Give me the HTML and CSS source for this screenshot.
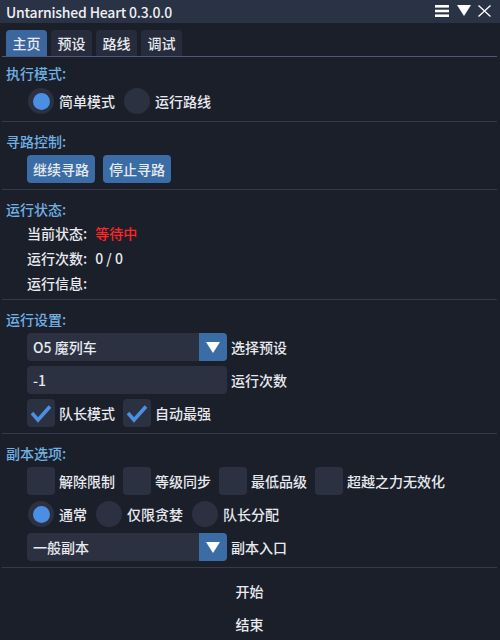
FILE: index.html
```html
<!DOCTYPE html>
<html lang="zh">
<head>
<meta charset="utf-8">
<title>Untarnished Heart</title>
<link rel="stylesheet" href="styles.css">
</head>
<body>
<div class="window">
  <div class="titlebar">
    <span class="title">Untarnished Heart 0.3.0.0</span>
    <div class="tb-icons">
      <svg class="ic-menu" width="14" height="12" viewBox="0 0 14 12"><rect x="0" y="0" width="14" height="2.6" fill="#fff"/><rect x="0" y="4.7" width="14" height="2.6" fill="#fff"/><rect x="0" y="9.4" width="14" height="2.6" fill="#fff"/></svg>
      <svg class="ic-tri" width="14" height="11" viewBox="0 0 14 11"><polygon points="0,0 14,0 7,11" fill="#fff"/></svg>
      <svg class="ic-x" width="13" height="12" viewBox="0 0 13 12"><path d="M0.5 0.5 L12.5 11.5 M12.5 0.5 L0.5 11.5" stroke="#fff" stroke-width="1.3" fill="none"/></svg>
    </div>
  </div>
  <div class="body">
    <div class="tabbar">
      <div class="tab active">主页</div>
      <div class="tab">预设</div>
      <div class="tab">路线</div>
      <div class="tab">调试</div>
    </div>

    <section class="sec first">
      <div class="hdr">执行模式:</div>
      <div class="row">
        <div class="opt"><span class="radio on"><span class="dot"></span></span><span>简单模式</span></div>
        <div class="opt"><span class="radio"></span><span>运行路线</span></div>
      </div>
    </section>

    <section class="sec">
      <div class="hdr">寻路控制:</div>
      <div class="row">
        <div class="btn">继续寻路</div>
        <div class="btn">停止寻路</div>
      </div>
    </section>

    <section class="sec">
      <div class="hdr">运行状态:</div>
      <div class="trow"><span>当前状态:</span><span class="val red">等待中</span></div>
      <div class="trow"><span>运行次数:</span><span class="val">0 / 0</span></div>
      <div class="trow"><span>运行信息:</span></div>
    </section>

    <section class="sec">
      <div class="hdr">运行设置:</div>
      <div class="row">
        <div class="combo"><span class="combo-text">O5 魔列车</span><span class="combo-btn"><svg width="14" height="11" viewBox="0 0 14 11"><polygon points="0,0 14,0 7,11" fill="#fff"/></svg></span></div>
        <span class="flabel">选择预设</span>
      </div>
      <div class="row">
        <div class="input">-1</div>
        <span class="flabel">运行次数</span>
      </div>
      <div class="row">
        <div class="opt"><span class="check"><svg width="28" height="28" viewBox="0 0 28 28"><polyline points="5,14 11,21 23,7.5" fill="none" stroke="#4a8fe4" stroke-width="3.6"/></svg></span><span>队长模式</span></div>
        <div class="opt"><span class="check"><svg width="28" height="28" viewBox="0 0 28 28"><polyline points="5,14 11,21 23,7.5" fill="none" stroke="#4a8fe4" stroke-width="3.6"/></svg></span><span>自动最强</span></div>
      </div>
    </section>

    <section class="sec">
      <div class="hdr">副本选项:</div>
      <div class="row">
        <div class="opt"><span class="check"></span><span>解除限制</span></div>
        <div class="opt"><span class="check"></span><span>等级同步</span></div>
        <div class="opt"><span class="check"></span><span>最低品级</span></div>
        <div class="opt"><span class="check"></span><span>超越之力无效化</span></div>
      </div>
      <div class="row">
        <div class="opt"><span class="radio on"><span class="dot"></span></span><span>通常</span></div>
        <div class="opt"><span class="radio"></span><span>仅限贪婪</span></div>
        <div class="opt"><span class="radio"></span><span>队长分配</span></div>
      </div>
      <div class="row">
        <div class="combo"><span class="combo-text">一般副本</span><span class="combo-btn"><svg width="14" height="11" viewBox="0 0 14 11"><polygon points="0,0 14,0 7,11" fill="#fff"/></svg></span></div>
        <span class="flabel">副本入口</span>
      </div>
    </section>

    <section class="sec last">
      <div class="cbtn">开始</div>
      <div class="cbtn">结束</div>
    </section>
  </div>
</div>
</body>
</html>
```

FILE: styles.css
```css
html, body {
  margin: 0;
  padding: 0;
  background: #1b1f2a;
}
body {
  font-family: "Noto Sans CJK SC", "Noto Sans", sans-serif;
  font-size: 14px;
  font-weight: 500;
  color: #e8eaf0;
}
.window {
  width: 500px;
  height: 640px;
  overflow: hidden;
  background: #1b1f2a;
}
.titlebar {
  height: 23px;
  background: #2a3245;
  display: flex;
  align-items: center;
  justify-content: space-between;
  padding: 0 9px 0 6px;
  box-sizing: border-box;
}
.title {
  line-height: 20px;
  color: #eef0f4;
  letter-spacing: -0.2px;
}
.tb-icons {
  display: flex;
  align-items: center;
  gap: 8px;
  margin-top: -2px;
}
.ic-x { margin-left: -1px; }
.body {
  padding: 0 3px 0 2px;
}
.tabbar {
  margin-top: 7px;
  padding-left: 4px;
  display: flex;
  gap: 4px;
  height: 26px;
  border-bottom: 1px solid #4a5883;
}
.tab {
  padding: 0 6.5px;
  line-height: 26px;
  background: #262c3b;
  border-radius: 4px 4px 0 0;
}
.tab.active {
  background: #3c679e;
}
.sec {
  padding: 10px 0 6px 4px;
  display: flex;
  flex-direction: column;
  gap: 5px;
  border-bottom: 1px solid #343a4a;
}
.sec.first {
  padding-top: 7px;
}
.sec.last {
  border-bottom: none;
  padding-top: 9px;
  padding-left: 0;
}
.hdr {
  line-height: 18px;
  height: 18px;
  color: #70b1e4;
}
.row {
  margin-left: 21px;
  height: 28px;
  display: flex;
  align-items: center;
  gap: 8px;
}
.opt {
  display: flex;
  align-items: center;
  gap: 4px;
}
.radio {
  width: 26px;
  height: 26px;
  margin: 1px;
  border-radius: 50%;
  background: #2b3141;
  display: flex;
  align-items: center;
  justify-content: center;
}
.radio .dot {
  width: 17px;
  height: 17px;
  border-radius: 50%;
  background: #4a8fe4;
}
.check {
  width: 28px;
  height: 28px;
  border-radius: 4px;
  background: #2b3141;
  display: block;
}
.check svg {
  display: block;
}
.btn {
  height: 28px;
  line-height: 28px;
  padding: 0 6px;
  background: #3a6da6;
  border-radius: 4px;
}
.trow {
  margin-left: 21px;
  height: 20px;
  line-height: 20px;
  display: flex;
}
.val {
  margin-left: 8px;
}
.red {
  color: #ff2525;
}
.combo {
  width: 200px;
  height: 28px;
  display: flex;
  background: #2b3141;
  border-radius: 4px;
}
.combo-text {
  flex: 1;
  padding-left: 6px;
  line-height: 28px;
}
.combo-btn {
  width: 28px;
  height: 28px;
  background: #3a6da6;
  border-radius: 0 4px 4px 0;
  display: flex;
  align-items: center;
  justify-content: center;
}
.input {
  width: 194px;
  height: 28px;
  line-height: 28px;
  padding-left: 6px;
  background: #2b3141;
  border-radius: 4px;
}
.flabel {
  margin-left: -4px;
}
.cbtn {
  height: 28px;
  line-height: 28px;
  text-align: center;
}
```
